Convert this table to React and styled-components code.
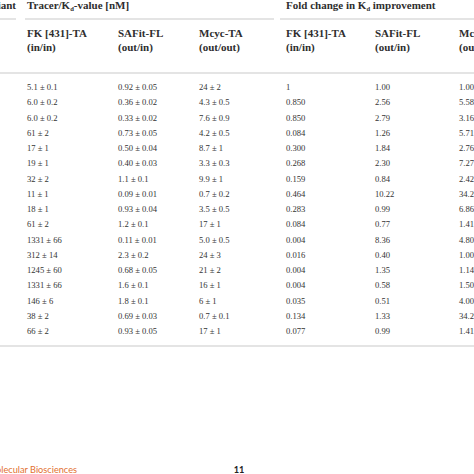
import React from "react";
import styled, { createGlobalStyle } from "styled-components";

const Global = createGlobalStyle`
  html, body { margin: 0; padding: 0; background: #ffffff; }
  body { width: 474px; height: 474px; overflow: hidden; }
  #root { width: 474px; height: 474px; overflow: hidden; }
`;

const Page = styled.div`
  width: 474px;
  height: 474px;
  overflow: hidden;
  display: flex;
  flex-direction: column;
  font-family: "Liberation Serif", "Times New Roman", serif;
  color: #2e2e2e;
`;

const Table = styled.div`
  width: 557px;
  display: flex;
  flex-direction: column;
`;

const cols = "25px 91px 81px 83px 93px 84px 100px";

const Row = styled.div`
  display: grid;
  grid-template-columns: ${cols};
  white-space: nowrap;
`;

const GroupRow = styled(Row)`
  font-weight: 700;
  font-size: 11px;
  line-height: 12px;
  margin-top: -1px;
`;

const GroupCell = styled.div`
  grid-column: ${(p) => p.$span};
  display: flex;
  justify-content: ${(p) => (p.$end ? "flex-end" : "flex-start")};
  padding-left: ${(p) => p.$pl || 0}px;
  margin-right: ${(p) => p.$mr || 0}px;
  padding-bottom: 7px;
  border-bottom: 2px solid #e4e4e4;
  overflow: visible;
`;

const HeadRow = styled(Row)`
  font-weight: 700;
  font-size: 11px;
  line-height: 14px;
  padding-top: 6px;
  padding-bottom: 18px;
  border-bottom: 2px solid #e4e4e4;
`;

const HeadCell = styled.div`
  padding-left: ${(p) => p.$pl || 2}px;
  display: flex;
  flex-direction: column;
`;

const Body = styled.div`
  padding-top: 6px;
  padding-bottom: 6px;
  border-bottom: 2px solid #e4e4e4;
`;

const DataRow = styled(Row)`
  font-size: 8.6px;
  line-height: 15.25px;
  height: 15.25px;
  color: #333;
`;

const DataCell = styled.div`
  padding-left: ${(p) => p.$pl || 2}px;
`;

const Sub = styled.sub`
  font-size: 0.6em;
  vertical-align: -0.25em;
  line-height: 0;
`;

const Footer = styled.div`
  margin-top: 118px;
  display: grid;
  grid-template-columns: 77px 1fr 77px;
  font-family: "Lato", "Open Sans", "Liberation Sans", sans-serif;
  font-size: 9.2px;
  line-height: 10px;
  white-space: nowrap;
`;

const Journal = styled.div`
  display: flex;
  justify-content: flex-end;
  color: #e2702f;
`;

const PageNum = styled.div`
  text-align: center;
  color: #222;
  font-weight: 700;
  padding-right: 77px;
  padding-left: 81px;
`;

const rows = [
  ["5.1 ± 0.1", "0.92 ± 0.05", "24 ± 2", "1", "1.00", "1.00"],
  ["6.0 ± 0.2", "0.36 ± 0.02", "4.3 ± 0.5", "0.850", "2.56", "5.58"],
  ["6.0 ± 0.2", "0.33 ± 0.02", "7.6 ± 0.9", "0.850", "2.79", "3.16"],
  ["61 ± 2", "0.73 ± 0.05", "4.2 ± 0.5", "0.084", "1.26", "5.71"],
  ["17 ± 1", "0.50 ± 0.04", "8.7 ± 1", "0.300", "1.84", "2.76"],
  ["19 ± 1", "0.40 ± 0.03", "3.3 ± 0.3", "0.268", "2.30", "7.27"],
  ["32 ± 2", "1.1 ± 0.1", "9.9 ± 1", "0.159", "0.84", "2.42"],
  ["11 ± 1", "0.09 ± 0.01", "0.7 ± 0.2", "0.464", "10.22", "34.29"],
  ["18 ± 1", "0.93 ± 0.04", "3.5 ± 0.5", "0.283", "0.99", "6.86"],
  ["61 ± 2", "1.2 ± 0.1", "17 ± 1", "0.084", "0.77", "1.41"],
  ["1331 ± 66", "0.11 ± 0.01", "5.0 ± 0.5", "0.004", "8.36", "4.80"],
  ["312 ± 14", "2.3 ± 0.2", "24 ± 3", "0.016", "0.40", "1.00"],
  ["1245 ± 60", "0.68 ± 0.05", "21 ± 2", "0.004", "1.35", "1.14"],
  ["1331 ± 66", "1.6 ± 0.1", "16 ± 1", "0.004", "0.58", "1.50"],
  ["146 ± 6", "1.8 ± 0.1", "6 ± 1", "0.035", "0.51", "4.00"],
  ["38 ± 2", "0.69 ± 0.03", "0.7 ± 0.1", "0.134", "1.33", "34.29"],
  ["66 ± 2", "0.93 ± 0.05", "17 ± 1", "0.077", "0.99", "1.41"],
];

const heads = [
  ["FK [431]-TA", "(in/in)"],
  ["SAFit-FL", "(out/in)"],
  ["Mcyc-TA", "(out/out)"],
];

export default function App() {
  return (
    <>
      <Global />
      <Page>
        <Table>
          <GroupRow>
            <GroupCell $span="1" $end $mr={9}>
              <span>Variant</span>
            </GroupCell>
            <GroupCell $span="2 / 5" $pl={2} $mr={6}>
              <span>
                Tracer/K<Sub>d</Sub>-value [nM]
              </span>
            </GroupCell>
            <GroupCell $span="5 / 8" $pl={6}>
              <span>
                Fold change in K<Sub>d</Sub> improvement
              </span>
            </GroupCell>
          </GroupRow>
          <HeadRow>
            <HeadCell />
            {heads.map((h, i) => (
              <HeadCell key={"a" + i}>
                <span>{h[0]}</span>
                <span>{h[1]}</span>
              </HeadCell>
            ))}
            {heads.map((h, i) => (
              <HeadCell key={"b" + i} $pl={i === 0 ? 6 : 2}>
                <span>{h[0]}</span>
                <span>{h[1]}</span>
              </HeadCell>
            ))}
          </HeadRow>
          <Body>
            {rows.map((r, i) => (
              <DataRow key={i}>
                <DataCell />
                {r.map((v, j) => (
                  <DataCell key={j} $pl={j === 3 ? 6 : 2}>
                    {v}
                  </DataCell>
                ))}
              </DataRow>
            ))}
          </Body>
        </Table>
        <Footer>
          <Journal>
            <span>Frontiers in Molecular Biosciences</span>
          </Journal>
          <PageNum>11</PageNum>
        </Footer>
      </Page>
    </>
  );
}
